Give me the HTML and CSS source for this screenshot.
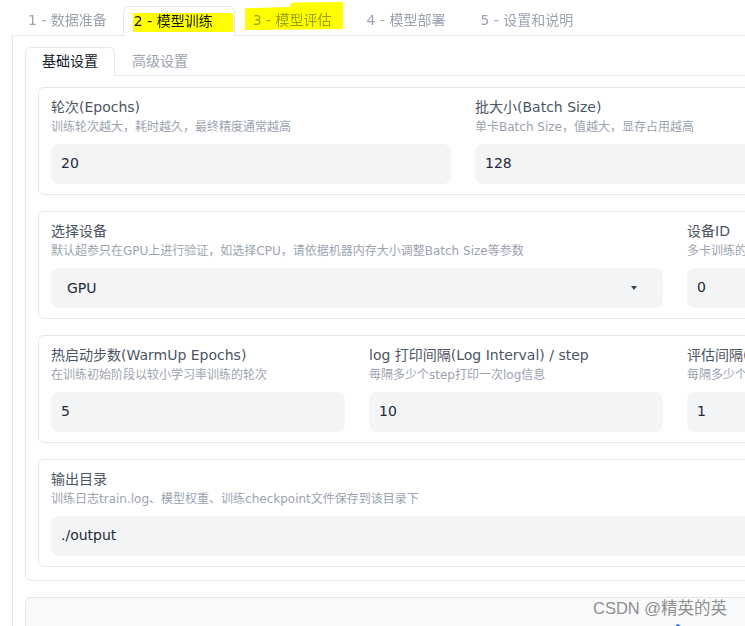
FILE: index.html
```html
<!DOCTYPE html>
<html lang="zh">
<head>
<meta charset="utf-8">
<title>模型训练</title>
<link rel="stylesheet" href="styles.css">
</head>
<body>
<div class="page">
  <div class="tabs">
    <div class="tab first">1 - 数据准备</div>
    <div class="tab active">2 - 模型训练</div>
    <div class="tab">3 - 模型评估</div>
    <div class="tab">4 - 模型部署</div>
    <div class="tab">5 - 设置和说明</div>
    <span class="hl hl2"></span>
    <span class="hl hl3"></span>
  </div>
  <div class="panel">
    <div class="subtabs">
      <div class="subtab active">基础设置</div>
      <div class="subtab">高级设置</div>
    </div>
    <div class="subpanel">
      <div class="card">
        <div class="grid g-two">
          <div class="field">
            <div class="label">轮次(Epochs)</div>
            <div class="desc">训练轮次越大，耗时越久，最终精度通常越高</div>
            <div class="input">20</div>
          </div>
          <div class="field">
            <div class="label">批大小(Batch Size)</div>
            <div class="desc">单卡Batch Size，值越大，显存占用越高</div>
            <div class="input">128</div>
          </div>
        </div>
      </div>
      <div class="card">
        <div class="grid g-device">
          <div class="field">
            <div class="label">选择设备</div>
            <div class="desc">默认超参只在GPU上进行验证，如选择CPU，请依据机器内存大小调整Batch Size等参数</div>
            <div class="input select"><span>GPU</span><span class="caret"></span></div>
          </div>
          <div class="field">
            <div class="label">设备ID</div>
            <div class="desc">多卡训练的设备ID，用逗号分隔</div>
            <div class="input">0</div>
          </div>
        </div>
      </div>
      <div class="card">
        <div class="grid g-three">
          <div class="field">
            <div class="label">热启动步数(WarmUp Epochs)</div>
            <div class="desc">在训练初始阶段以较小学习率训练的轮次</div>
            <div class="input">5</div>
          </div>
          <div class="field">
            <div class="label">log 打印间隔(Log Interval) / step</div>
            <div class="desc">每隔多少个step打印一次log信息</div>
            <div class="input">10</div>
          </div>
          <div class="field">
            <div class="label">评估间隔(Eval Interval) / epoch</div>
            <div class="desc">每隔多少个epoch进行一次模型评估</div>
            <div class="input">1</div>
          </div>
        </div>
      </div>
      <div class="card">
        <div class="field">
          <div class="label">输出目录</div>
          <div class="desc">训练日志train.log、模型权重、训练checkpoint文件保存到该目录下</div>
          <div class="input">./output</div>
        </div>
      </div>
    </div>
    <div class="bottombox">
      <svg class="bicon" width="14" height="10" viewBox="0 0 14 10"><path d="M1.5 8 L7 3 L12.5 8" fill="none" stroke="#3b6fd8" stroke-width="2"/></svg>
    </div>
  </div>
  <div class="watermark">CSDN @精英的英</div>
</div>
</body>
</html>
```

FILE: styles.css
```css
html, body {
  margin: 0;
  padding: 0;
  overflow: hidden;
  background: #ffffff;
}

body {
  font-family: "DejaVu Sans", "Noto Sans CJK SC", sans-serif;
  font-size: 14px;
  color: #1f2937;
}

.page {
  position: relative;
  width: 1020px;
  padding: 6px 0 0 12px;
  height: 620px;
}

.tabs {
  position: relative;
  z-index: 2;
  display: flex;
  align-items: flex-start;
  height: 29px;
}

.tab {
  box-sizing: border-box;
  height: 29px;
  line-height: 29px;
  padding: 0 17px 0 18px;
  color: #9ca3af;
  white-space: nowrap;
}

.tab.first {
  padding: 0 16px;
}

.tab.active {
  height: 30px;
  line-height: 28px;
  padding: 0 21px 1px 10px;
  border: 1px solid #e5e7eb;
  border-bottom: none;
  border-radius: 6px 6px 0 0;
  background: #ffffff;
  color: #111827;
}

.hl {
  position: absolute;
  background: #ffff00;
  mix-blend-mode: multiply;
}

.hl2 {
  left: 121px;
  top: 7px;
  width: 100px;
  height: 19px;
}

.hl3 {
  left: 233px;
  top: -4px;
  width: 98px;
  height: 28px;
  clip-path: polygon(0 22%, 45% 18%, 48% 2%, 100% 0, 100% 96%, 0 100%);
}

.panel {
  box-sizing: border-box;
  width: 1008px;
  border: 1px solid #e5e7eb;
  padding: 11px 12px 20px;
}

.subtabs {
  position: relative;
  z-index: 2;
  display: flex;
  align-items: flex-start;
  height: 28px;
}

.subtab {
  box-sizing: border-box;
  height: 28px;
  line-height: 27px;
  padding: 0 16px;
  border: 1px solid transparent;
  border-bottom: none;
  color: #9ca3af;
  white-space: nowrap;
}

.subtab.active {
  height: 29px;
  border-color: #e5e7eb;
  border-radius: 6px 6px 0 0;
  background: #ffffff;
  color: #111827;
}

.subpanel {
  display: flex;
  flex-direction: column;
  gap: 16px;
  border: 1px solid #e5e7eb;
  border-radius: 0 6px 6px 6px;
  padding: 11px 12px 13px;
}

.card {
  border: 1px solid #e5e7eb;
  border-radius: 6px;
  padding: 9px 12px 10px;
  background: #ffffff;
}

.grid {
  display: grid;
  column-gap: 24px;
}

.g-two {
  grid-template-columns: 400px 400px;
}

.g-device {
  grid-template-columns: 612px 294px;
}

.g-three {
  grid-template-columns: 294px 294px 294px;
}

.field {
  min-width: 0;
}

.label {
  font-size: 14px;
  line-height: 20px;
  color: #4b5563;
  white-space: nowrap;
}

.desc {
  font-size: 12px;
  line-height: 20px;
  color: #9ca3af;
  white-space: nowrap;
}

.input {
  box-sizing: border-box;
  margin-top: 7px;
  height: 40px;
  line-height: 39px;
  padding: 0 10px;
  border-radius: 8px;
  background: #f3f4f6;
  font-size: 14px;
  color: #1f2937;
}

.input.select {
  display: flex;
  align-items: center;
  justify-content: space-between;
  padding: 0 26px 0 16px;
}

.caret {
  width: 0;
  height: 0;
  border-left: 3.5px solid transparent;
  border-right: 3.5px solid transparent;
  border-top: 4px solid #374151;
}

.bottombox {
  margin-top: 16px;
  height: 80px;
  box-sizing: border-box;
  border: 1px solid #e5e7eb;
  border-radius: 6px;
  background: #f9fafb;
  padding: 24px 0 0 645px;
}

.bicon {
  display: block;
}

.watermark {
  position: absolute;
  left: 593px;
  top: 597px;
  font-family: "Liberation Sans", "Noto Sans CJK SC", sans-serif;
  font-size: 16.5px;
  line-height: 22px;
  color: #8f8f8f;
  white-space: nowrap;
}
```
